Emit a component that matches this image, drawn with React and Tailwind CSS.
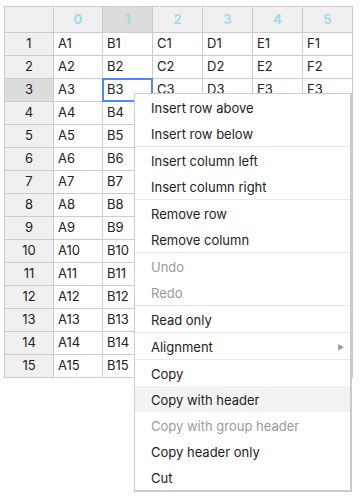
import React from "react";

const cols = ["0", "1", "2", "3", "4", "5"];
const letters = ["A", "B", "C", "D", "E", "F"];
const rows = Array.from({ length: 15 }, (_, i) => i + 1);

const menu = [
  { t: "Insert row above" },
  { t: "Insert row below", sep: true },
  { t: "Insert column left" },
  { t: "Insert column right", sep: true },
  { t: "Remove row" },
  { t: "Remove column", sep: true },
  { t: "Undo", dis: true },
  { t: "Redo", dis: true, sep: true },
  { t: "Read only", sep: true },
  { t: "Alignment", sub: true, sep: true },
  { t: "Copy" },
  { t: "Copy with header", hl: true },
  { t: "Copy with group header", dis: true },
  { t: "Copy header only" },
  { t: "Cut" },
];

export default function App() {
  const font = { fontFamily: "Inter, 'Liberation Sans', sans-serif" };
  return (
    <div className="w-[363px] h-[501px] bg-white relative overflow-hidden text-[13px] text-[#222]" style={font}>
      <div className="pt-[6px] pl-[4px]">
        <div className="inline-block border-l border-t border-[#ccc]">
          <div className="flex">
            <div className="w-[49px] h-[26px] border-r border-b border-[#ccc] bg-[#f0f0f0]" />
            {cols.map((c, i) => (
              <div
                key={c}
                className={`${i === 0 ? "w-[49px]" : "w-[50px]"} h-[26px] border-r border-b border-[#ccc] flex items-center justify-center font-bold text-[#a6d9e8] ${i === 1 ? "bg-[#dcdcdc]" : "bg-[#f0f0f0]"}`}
              >
                {c}
              </div>
            ))}
          </div>
          {rows.map((r) => (
            <div key={r} className="flex">
              <div
                className={`w-[49px] h-[23px] border-r border-b border-[#ccc] flex items-center justify-center text-[#222] ${r === 3 ? "bg-[#dcdcdc]" : "bg-[#f0f0f0]"}`}
              >
                {r}
              </div>
              {letters.map((l, i) => (
                <div
                  key={l}
                  className={`${i === 0 ? "w-[49px]" : "w-[50px]"} h-[23px] border-r border-b border-[#ccc] flex items-center pl-[4px] relative bg-white`}
                >
                  {l}
                  {r}
                  {r === 3 && i === 1 && (
                    <div className="absolute left-[-1px] top-[-1px] w-[51px] h-[24px] border-2 border-[#4b89ff]" />
                  )}
                </div>
              ))}
            </div>
          ))}
        </div>
      </div>

      <div className="absolute left-[134px] top-[93px] w-[218px] bg-white border-l border-t border-r-2 border-b-2 border-[#ccc]">
        {menu.map((m) => (
          <div key={m.t} className={m.sep ? "border-b border-[#e6e6e6]" : ""}>
            <div
              className={`h-[26px] flex items-center pt-[4px] pl-[16px] pr-[6px] ${m.hl ? "bg-[#f3f3f3]" : ""} ${m.dis ? "text-[#999]" : "text-[#222]"}`}
            >
              <span className="flex-1">{m.t}</span>
              {m.sub && <span className="text-[7px] text-[#999]">▶</span>}
            </div>
          </div>
        ))}
      </div>
    </div>
  );
}
